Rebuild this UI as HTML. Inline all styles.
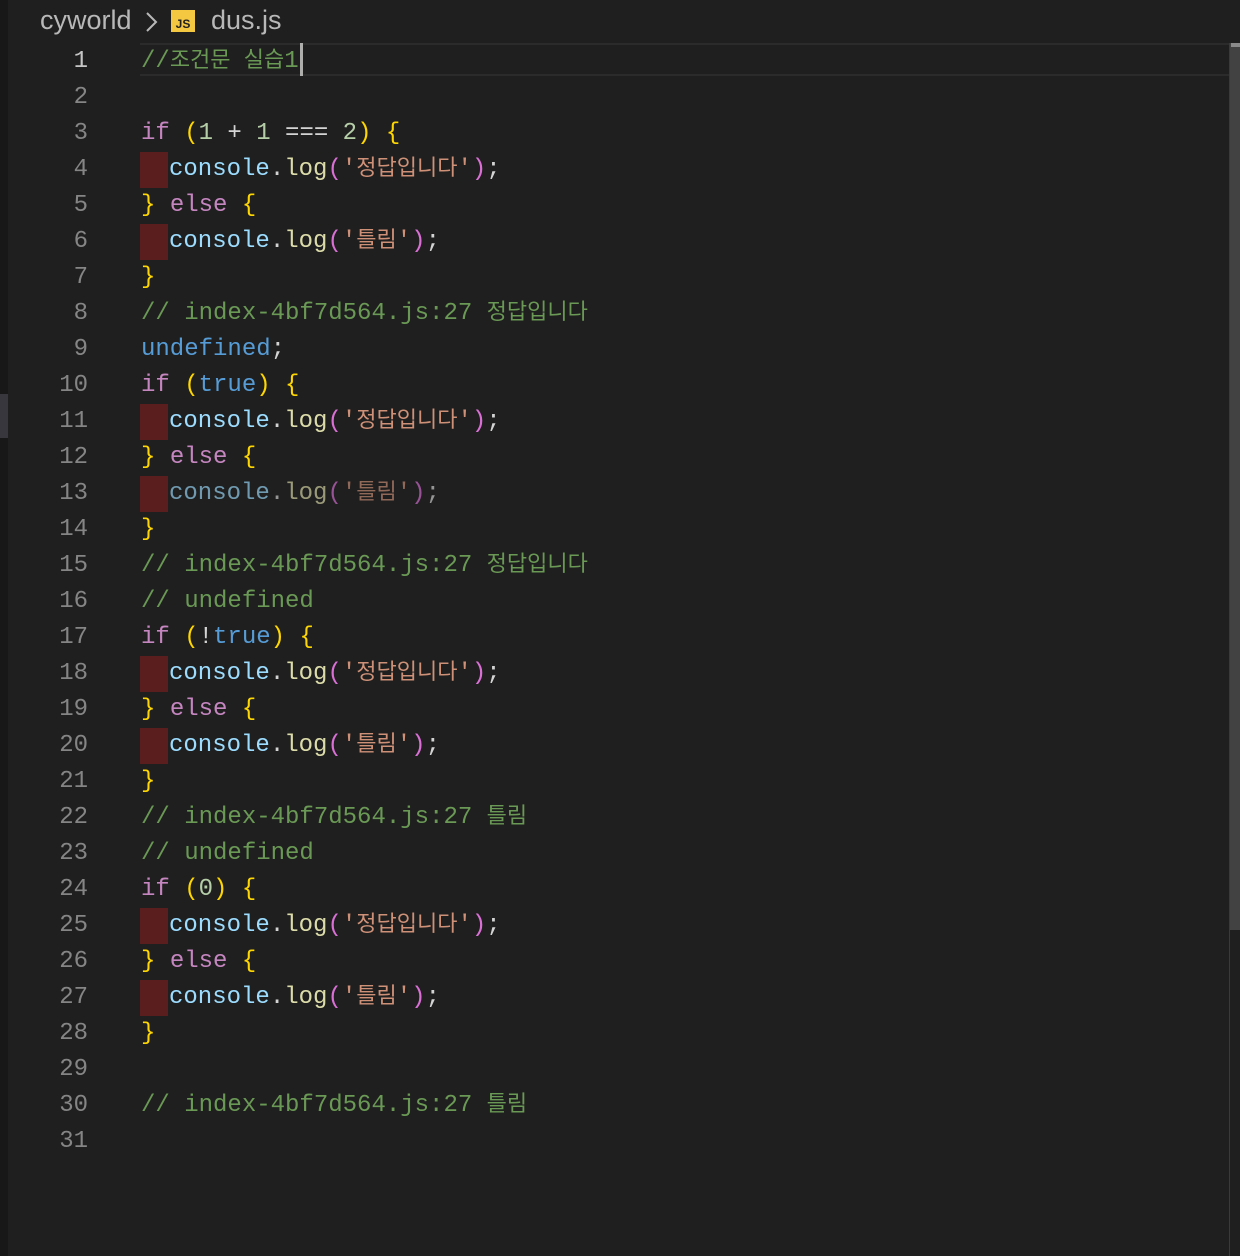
<!DOCTYPE html>
<html><head><meta charset="utf-8"><style>
body{margin:0;width:1240px;height:1256px;background:#1f1f1f;overflow:hidden;position:relative;font-family:"Liberation Mono","Noto Sans CJK KR",monospace;}
.strip{position:absolute;left:0;top:0;width:8px;height:1256px;background:#181818}
.strip i{position:absolute;left:0;top:394px;width:8px;height:44px;background:#37373d}
.bc{position:absolute;left:40px;top:5px;font-family:"Liberation Sans",sans-serif;font-size:27px;color:#b8b8b8}
.js{position:absolute;left:171px;top:10px;width:24px;height:22px;background:#f5c842;color:#222;font:bold 12px "Liberation Sans",sans-serif;text-align:center;line-height:28px}
.cur{position:absolute;left:140px;top:43px;width:1090px;height:33px;border-top:2px solid #2b2b2b;border-bottom:2px solid #2b2b2b;box-sizing:border-box}
.caret{position:absolute;left:300px;top:43px;width:3px;height:33px;background:#aeafad}
.sb{position:absolute;left:1230px;top:43px;width:10px;height:887px;background:#424242}
.sbl{position:absolute;left:1229px;top:43px;width:1px;height:1213px;background:#3a3a3a}
.sbt{position:absolute;left:1231px;top:43px;width:9px;height:4px;background:#8a8a8a}
.ln{position:absolute;left:30px;width:58px;text-align:right;font-size:24px;color:#858585;line-height:36px;margin-top:2px}
.l{position:absolute;left:141px;font-size:24px;line-height:36px;white-space:pre;color:#d4d4d4;margin-top:2px}
.ind{display:inline-block;width:28px;height:36px;background:#5a1e1e;vertical-align:top;margin-left:-1px;margin-right:1px}
.c{color:#6a9955}.k{color:#c586c0}.y{color:#ffd700}.n{color:#b5cea8}.v{color:#9cdcfe}.f{color:#dcdcaa}.s{color:#ce9178}.p{color:#da70d6}.b{color:#569cd6}
h{font-size:22px}
</style></head><body>
<div class="strip"><i></i></div>
<div class="bc">cyworld</div>
<svg style="position:absolute;left:145px;top:11px" width="14" height="22"><path d="M2 2 L11 11 L2 20" stroke="#b8b8b8" stroke-width="2" fill="none"/></svg>
<div class="js">JS</div>
<div class="bc" style="left:211px">dus.js</div>
<div class="cur"></div>
<div class="sbl"></div><div class="sb"></div><div class="sbt"></div>
<div class="caret"></div>

<div class="ln" style="top:42px;color:#c6c6c6">1</div><div class="l" style="top:42px"><span class="c">//<h>조건문 실습</h>1</span></div>
<div class="ln" style="top:78px">2</div>
<div class="ln" style="top:114px">3</div><div class="l" style="top:114px"><span class="k">if</span> <span class="y">(</span><span class="n">1</span> + <span class="n">1</span> === <span class="n">2</span><span class="y">)</span> <span class="y">{</span></div>
<div class="ln" style="top:150px">4</div><div class="l" style="top:150px"><span class="ind"></span><span class="v">console</span>.<span class="f">log</span><span class="p">(</span><span class="s">'<h>정답입니다</h>'</span><span class="p">)</span>;</div>
<div class="ln" style="top:186px">5</div><div class="l" style="top:186px"><span class="y">}</span> <span class="k">else</span> <span class="y">{</span></div>
<div class="ln" style="top:222px">6</div><div class="l" style="top:222px"><span class="ind"></span><span class="v">console</span>.<span class="f">log</span><span class="p">(</span><span class="s">'<h>틀림</h>'</span><span class="p">)</span>;</div>
<div class="ln" style="top:258px">7</div><div class="l" style="top:258px"><span class="y">}</span></div>
<div class="ln" style="top:294px">8</div><div class="l" style="top:294px"><span class="c">// index-4bf7d564.js:27 <h>정답입니다</h></span></div>
<div class="ln" style="top:330px">9</div><div class="l" style="top:330px"><span class="b">undefined</span>;</div>
<div class="ln" style="top:366px">10</div><div class="l" style="top:366px"><span class="k">if</span> <span class="y">(</span><span class="b">true</span><span class="y">)</span> <span class="y">{</span></div>
<div class="ln" style="top:402px">11</div><div class="l" style="top:402px"><span class="ind"></span><span class="v">console</span>.<span class="f">log</span><span class="p">(</span><span class="s">'<h>정답입니다</h>'</span><span class="p">)</span>;</div>
<div class="ln" style="top:438px">12</div><div class="l" style="top:438px"><span class="y">}</span> <span class="k">else</span> <span class="y">{</span></div>
<div class="ln" style="top:474px">13</div><div class="l" style="top:474px;"><span class="ind"></span><span style="opacity:.65"><span class="v">console</span>.<span class="f">log</span><span class="p">(</span><span class="s">'<h>틀림</h>'</span><span class="p">)</span>;</span></div>
<div class="ln" style="top:510px">14</div><div class="l" style="top:510px"><span class="y">}</span></div>
<div class="ln" style="top:546px">15</div><div class="l" style="top:546px"><span class="c">// index-4bf7d564.js:27 <h>정답입니다</h></span></div>
<div class="ln" style="top:582px">16</div><div class="l" style="top:582px"><span class="c">// undefined</span></div>
<div class="ln" style="top:618px">17</div><div class="l" style="top:618px"><span class="k">if</span> <span class="y">(</span>!<span class="b">true</span><span class="y">)</span> <span class="y">{</span></div>
<div class="ln" style="top:654px">18</div><div class="l" style="top:654px"><span class="ind"></span><span class="v">console</span>.<span class="f">log</span><span class="p">(</span><span class="s">'<h>정답입니다</h>'</span><span class="p">)</span>;</div>
<div class="ln" style="top:690px">19</div><div class="l" style="top:690px"><span class="y">}</span> <span class="k">else</span> <span class="y">{</span></div>
<div class="ln" style="top:726px">20</div><div class="l" style="top:726px"><span class="ind"></span><span class="v">console</span>.<span class="f">log</span><span class="p">(</span><span class="s">'<h>틀림</h>'</span><span class="p">)</span>;</div>
<div class="ln" style="top:762px">21</div><div class="l" style="top:762px"><span class="y">}</span></div>
<div class="ln" style="top:798px">22</div><div class="l" style="top:798px"><span class="c">// index-4bf7d564.js:27 <h>틀림</h></span></div>
<div class="ln" style="top:834px">23</div><div class="l" style="top:834px"><span class="c">// undefined</span></div>
<div class="ln" style="top:870px">24</div><div class="l" style="top:870px"><span class="k">if</span> <span class="y">(</span><span class="n">0</span><span class="y">)</span> <span class="y">{</span></div>
<div class="ln" style="top:906px">25</div><div class="l" style="top:906px"><span class="ind"></span><span class="v">console</span>.<span class="f">log</span><span class="p">(</span><span class="s">'<h>정답입니다</h>'</span><span class="p">)</span>;</div>
<div class="ln" style="top:942px">26</div><div class="l" style="top:942px"><span class="y">}</span> <span class="k">else</span> <span class="y">{</span></div>
<div class="ln" style="top:978px">27</div><div class="l" style="top:978px"><span class="ind"></span><span class="v">console</span>.<span class="f">log</span><span class="p">(</span><span class="s">'<h>틀림</h>'</span><span class="p">)</span>;</div>
<div class="ln" style="top:1014px">28</div><div class="l" style="top:1014px"><span class="y">}</span></div>
<div class="ln" style="top:1050px">29</div>
<div class="ln" style="top:1086px">30</div><div class="l" style="top:1086px"><span class="c">// index-4bf7d564.js:27 <h>틀림</h></span></div>
<div class="ln" style="top:1122px">31</div>
</body></html>
